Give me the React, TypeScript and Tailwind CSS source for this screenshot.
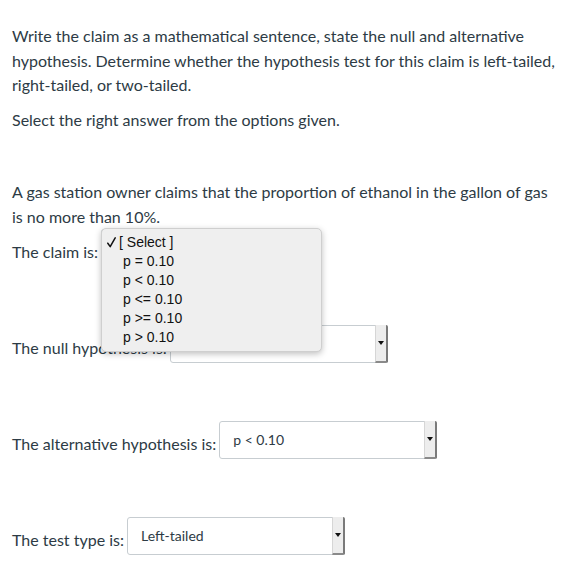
import React from "react";

const lato = { fontFamily: "Lato, 'Open Sans', sans-serif" };

function FakeSelect({ value }: { value?: string }) {
  return (
    <div className="relative flex h-[38px] w-[218px] items-center rounded-[3px] border border-[#c7cdd1] bg-white">
      <span className="pl-[13px] text-[14px] text-[#2d3b45]" style={lato}>
        {value ?? ""}
      </span>
      <div className="absolute right-[-1px] top-[-1px] bottom-[-1px] flex w-[13px] items-center justify-center border-l border-[#d6d6d6] border-r-2 border-r-[#7a7a7a] border-b-2 border-b-[#8a8a8a] bg-[#ededed] rounded-tr-[2px] rounded-br-[2px]">
        <svg width="6" height="4" viewBox="0 0 6 4">
          <path d="M0 0 H6 L3 4 Z" fill="#111" />
        </svg>
      </div>
    </div>
  );
}

function Row({ label, value, children, className }: { label: string; value?: string; children?: React.ReactNode; className?: string }) {
  return (
    <div className={"flex items-center " + (className ?? "")}>
      <span className="pt-[8px] pr-[3px]">{label}</span>
      <div className="relative">
        <FakeSelect value={value} />
        {children}
      </div>
    </div>
  );
}

export default function App() {
  const opts = ["p = 0.10", "p < 0.10", "p <= 0.10", "p >= 0.10", "p > 0.10"];
  return (
    <div
      className="min-h-[576px] w-[566px] bg-white pl-[12px] pr-[4px] pt-[24px] text-[16px] leading-[24.5px] text-[#2d3b45]"
      style={lato}
    >
      <p>
        Write the claim as a mathematical sentence, state the null and alternative hypothesis. Determine whether the hypothesis test for this claim is left-tailed, right-tailed, or two-tailed.
      </p>
      <p className="mt-[10px]">Select the right answer from the options given.</p>
      <p className="mt-[48px]">
        A gas station owner claims that the proportion of ethanol in the gallon of gas is no more than 10%.
      </p>
      <Row label="The claim is:" className="mt-0">
        <div
          className="absolute left-0 top-[-1px] z-10 w-[221px] rounded-[5px] border border-[#cfcfcf] bg-[#efefef] py-[4px] text-[14px] leading-[19px] text-[#111] shadow-[0_2px_6px_rgba(0,0,0,0.25)]"
          style={{ fontFamily: "'Liberation Sans', Arial, sans-serif" }}
        >
          <div className="flex items-center pl-[5px]">
            <span className="flex w-[12px] items-center">
              <svg width="9" height="11" viewBox="0 0 9 11">
                <path d="M0.8 6.2 L3.2 9.6 L8.2 0.8" fill="none" stroke="#111" strokeWidth="1.5" strokeLinecap="round" strokeLinejoin="round" />
              </svg>
            </span>
            <span>[ Select ]</span>
          </div>
          {opts.map((o) => (
            <div key={o} className="pl-[21px]">
              {o}
            </div>
          ))}
        </div>
      </Row>
      <Row label="The null hypothesis is:" className="mt-[58px]" />
      <Row label="The alternative hypothesis is:" value="p < 0.10" className="mt-[58px]" />
      <Row label="The test type is:" value="Left-tailed" className="mt-[58px]" />
    </div>
  );
}
